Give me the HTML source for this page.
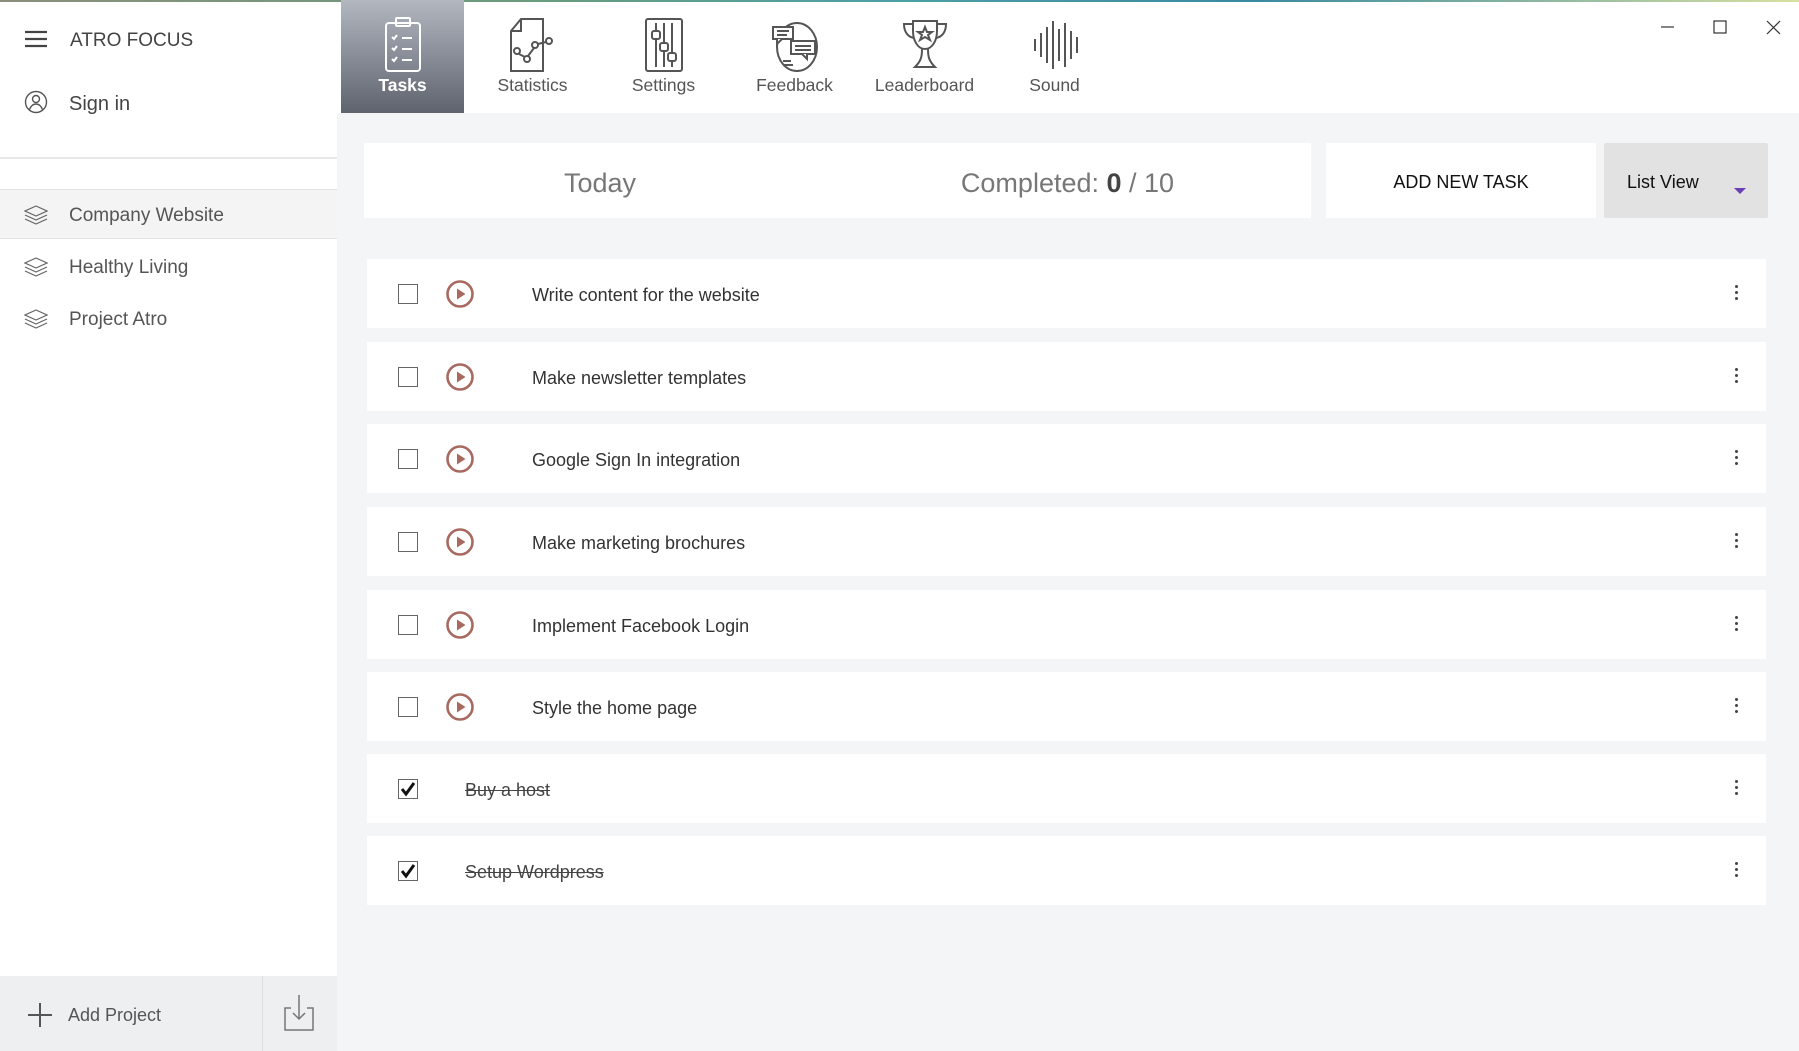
<!DOCTYPE html>
<html><head><meta charset="utf-8"><style>
*{margin:0;padding:0;box-sizing:border-box}
body{width:1799px;height:1051px;overflow:hidden;background:#f4f5f7;font-family:"Liberation Sans",sans-serif;position:relative;color:#333}
.abs{position:absolute}
#side{left:0;top:0;width:337px;height:1051px;background:#fff}
#hdr{left:337px;top:0;width:1462px;height:113px;background:#fff}
#topline{left:0;top:0;width:1799px;height:2px;background:linear-gradient(90deg,#8a8f7a,#6a9c7e 30%,#4aa0a8 50%,#3a8aa0 70%,#d8e0a0)}
.side-t{font-size:19px;color:#444}
.proj{left:0;width:337px;height:50px;font-size:19px;color:#555;display:flex;align-items:center;padding-left:69px;padding-top:4px}
.tab{top:0;width:123px;height:113px;text-align:center;font-size:17.5px;color:#555}
.tab svg{position:absolute;left:50%;top:17px;transform:translateX(-50%)}
.tab span{position:absolute;left:0;right:0;top:75px}
.row{left:367px;width:1399px;height:69px;background:#fff}
.cb{position:absolute;left:31px;top:25px;width:20px;height:20px;border:1.6px solid #666;background:#fff}
.play{position:absolute;left:78px;top:20px}
.tt{position:absolute;left:165px;top:26px;font-size:18px;color:#333}
.done .tt{left:98px;text-decoration:line-through;color:#444}
.kb{position:absolute;right:28px;top:26px;width:3px}
.kb i{display:block;width:3px;height:3px;background:#444;border-radius:50%;margin-bottom:3px}
</style></head><body>
<div id="side" class="abs"></div>
<div id="hdr" class="abs"></div>
<div id="topline" class="abs"></div>

<svg class="abs" style="left:25px;top:30px" width="22" height="18"><g stroke="#444" stroke-width="2.2"><line x1="0" y1="2" x2="22" y2="2"/><line x1="0" y1="9" x2="22" y2="9"/><line x1="0" y1="16" x2="22" y2="16"/></g></svg>
<div class="abs side-t" style="left:70px;top:30px">ATRO FOCUS</div>
<svg class="abs" style="left:24px;top:90px" width="24" height="24" fill="none" stroke="#555" stroke-width="1.4"><circle cx="12" cy="12" r="10.5"/><circle cx="12" cy="9" r="3.5"/><path d="M5.5 19.5c1.5-4 3.5-5.5 6.5-5.5s5 1.5 6.5 5.5"/></svg>
<div class="abs" style="left:69px;top:93px;font-size:20px;color:#444">Sign in</div>
<div class="abs" style="left:0;top:157px;width:337px;height:2px;background:#e8e8e8"></div>
<div class="abs" style="left:0;top:189px;width:337px;height:50px;background:#f4f4f4;border-top:1px solid #e4e4e4;border-bottom:1px solid #e4e4e4"></div>
<div class="abs proj" style="top:189px">Company Website</div>
<div class="abs proj" style="top:241px">Healthy Living</div>
<div class="abs proj" style="top:293px">Project Atro</div>
<svg class="abs" style="left:24px;top:205px" width="24" height="20" fill="none" stroke="#666" stroke-width="1.2"><path d="M12 1L23 6 12 11 1 6z"/><path d="M1 10l11 5 11-5"/><path d="M1 14l11 5 11-5"/></svg>
<svg class="abs" style="left:24px;top:257px" width="24" height="20" fill="none" stroke="#666" stroke-width="1.2"><path d="M12 1L23 6 12 11 1 6z"/><path d="M1 10l11 5 11-5"/><path d="M1 14l11 5 11-5"/></svg>
<svg class="abs" style="left:24px;top:309px" width="24" height="20" fill="none" stroke="#666" stroke-width="1.2"><path d="M12 1L23 6 12 11 1 6z"/><path d="M1 10l11 5 11-5"/><path d="M1 14l11 5 11-5"/></svg>

<div class="abs" style="left:0;top:976px;width:262px;height:75px;background:#eeeff0"></div>
<div class="abs" style="left:262px;top:976px;width:75px;height:75px;background:#eeeff0;border-left:1px solid #ddd"></div>
<svg class="abs" style="left:28px;top:1003px" width="24" height="24" stroke="#555" stroke-width="2"><line x1="12" y1="0" x2="12" y2="24"/><line x1="0" y1="12" x2="24" y2="12"/></svg>
<div class="abs" style="left:68px;top:1005px;font-size:18px;color:#555">Add Project</div>
<svg class="abs" style="left:283px;top:993px" width="32" height="40" fill="none" stroke="#777" stroke-width="1.5"><path d="M8 15H2v22h28V15h-6"/><path d="M16 2v24M10 20l6 6 6-6"/></svg>

<div class="abs tab" style="left:341px;background:linear-gradient(#b2b7c0,#5e636e);color:#fff;font-weight:bold">
<svg width="40" height="56" fill="none" stroke="#fff" stroke-width="2"><rect x="3" y="6" width="34" height="48" rx="3"/><rect x="13" y="1" width="14" height="8" rx="1"/><path d="M9 20l2 2 3-4M9 31l2 2 3-4M9 42l2 2 3-4"/><path d="M19 21h10M19 32h10M19 43h10"/></svg><span>Tasks</span></div>
<div class="abs tab" style="left:471px"><svg width="52" height="56" fill="none" stroke="#555" stroke-width="2"><path d="M14 2h22v52H4V14z"/><path d="M4 14h10V2"/><circle cx="10" cy="34" r="3"/><circle cx="20" cy="42" r="3"/><circle cx="28" cy="28" r="3"/><circle cx="42" cy="24" r="3"/><path d="M12 37l6 3M21 39l6-8M31 27l8-2"/></svg><span>Statistics</span></div>
<div class="abs tab" style="left:602px"><svg width="40" height="56" fill="none" stroke="#555" stroke-width="2"><rect x="2" y="2" width="36" height="52" rx="2"/><path d="M12 6v44M20 6v44M28 6v44"/><rect x="8" y="14" width="8" height="8" rx="2" fill="#fff"/><rect x="16" y="26" width="8" height="8" rx="2" fill="#fff"/><rect x="24" y="36" width="8" height="8" rx="2" fill="#fff"/></svg><span>Settings</span></div>
<div class="abs tab" style="left:733px"><svg width="52" height="56" fill="none" stroke="#555" stroke-width="2"><ellipse cx="28" cy="30" rx="20" ry="24"/><rect x="4" y="10" width="20" height="12" fill="#fff"/><path d="M8 22v5l5-5" fill="#fff"/><path d="M8 14h12M8 18h10"/><rect x="22" y="24" width="24" height="13" fill="#fff"/><path d="M38 37v5l-5-5" fill="#fff"/><path d="M26 29h16M26 33h16"/><path d="M14 44h8M14 48h10"/></svg><span>Feedback</span></div>
<div class="abs tab" style="left:863px"><svg width="50" height="56" fill="none" stroke="#555" stroke-width="2"><path d="M13 4h24v10c0 10-5 18-12 18S13 24 13 14z"/><path d="M13 7H4c0 8 4 13 10 14M37 7h9c0 8-4 13-10 14"/><path d="M22 32c0 8-1 12-7 18h20c-6-6-7-10-7-18"/><path d="M25 10l2 5h5l-4 3 2 5-5-3-5 3 2-5-4-3h5z"/></svg><span>Leaderboard</span></div>
<div class="abs tab" style="left:993px"><svg width="52" height="56" stroke="#555" stroke-width="2"><path d="M6 22v12M12 16v24M18 10v36M24 4v48M30 12v32M36 6v44M42 14v28M48 20v16"/></svg><span>Sound</span></div>

<svg class="abs" style="left:1660px;top:18px" width="130" height="20" stroke="#333" stroke-width="1.2" fill="none"><line x1="1" y1="9" x2="14" y2="9"/><rect x="54" y="3" width="12" height="12"/><path d="M107 3l13 13M120 3l-13 13"/></svg>

<div class="abs" style="left:364px;top:143px;width:947px;height:75px;background:#fff"></div>
<div class="abs" style="left:364px;top:168px;width:472px;text-align:center;font-size:27px;color:#777">Today</div>
<div class="abs" style="left:860px;top:168px;width:415px;text-align:center;font-size:27px;color:#777">Completed: <b style="color:#444">0</b> / 10</div>
<div class="abs" style="left:1326px;top:145px;width:270px;height:75px;text-align:center;line-height:75px;font-size:18px;color:#111"></div>
<div class="abs" style="left:1326px;top:143px;width:270px;height:75px;background:#fff;text-align:center;line-height:78px;font-size:18px;color:#111">ADD NEW TASK</div>
<div class="abs" style="left:1604px;top:143px;width:164px;height:75px;background:#e2e2e2;border-radius:2px"></div>
<div class="abs" style="left:1627px;top:172px;font-size:18px;color:#111">List View</div>
<svg class="abs" style="left:1734px;top:188px" width="14" height="8"><path d="M0 0h12L6 6z" fill="#6a3fb5"/></svg>

<div class="abs row" style="top:259px"><div class="cb"></div><svg class="play" width="30" height="30"><circle cx="15" cy="15" r="12.5" fill="none" stroke="#a86a60" stroke-width="2.6"/><path d="M12 9.5v11l8.5-5.5z" fill="#a86a60"/></svg><div class="tt">Write content for the website</div><div class="kb"><i></i><i></i><i></i></div></div>
<div class="abs row" style="top:342px"><div class="cb"></div><svg class="play" width="30" height="30"><circle cx="15" cy="15" r="12.5" fill="none" stroke="#a86a60" stroke-width="2.6"/><path d="M12 9.5v11l8.5-5.5z" fill="#a86a60"/></svg><div class="tt">Make newsletter templates</div><div class="kb"><i></i><i></i><i></i></div></div>
<div class="abs row" style="top:424px"><div class="cb"></div><svg class="play" width="30" height="30"><circle cx="15" cy="15" r="12.5" fill="none" stroke="#a86a60" stroke-width="2.6"/><path d="M12 9.5v11l8.5-5.5z" fill="#a86a60"/></svg><div class="tt">Google Sign In integration</div><div class="kb"><i></i><i></i><i></i></div></div>
<div class="abs row" style="top:507px"><div class="cb"></div><svg class="play" width="30" height="30"><circle cx="15" cy="15" r="12.5" fill="none" stroke="#a86a60" stroke-width="2.6"/><path d="M12 9.5v11l8.5-5.5z" fill="#a86a60"/></svg><div class="tt">Make marketing brochures</div><div class="kb"><i></i><i></i><i></i></div></div>
<div class="abs row" style="top:590px"><div class="cb"></div><svg class="play" width="30" height="30"><circle cx="15" cy="15" r="12.5" fill="none" stroke="#a86a60" stroke-width="2.6"/><path d="M12 9.5v11l8.5-5.5z" fill="#a86a60"/></svg><div class="tt">Implement Facebook Login</div><div class="kb"><i></i><i></i><i></i></div></div>
<div class="abs row" style="top:672px"><div class="cb"></div><svg class="play" width="30" height="30"><circle cx="15" cy="15" r="12.5" fill="none" stroke="#a86a60" stroke-width="2.6"/><path d="M12 9.5v11l8.5-5.5z" fill="#a86a60"/></svg><div class="tt">Style the home page</div><div class="kb"><i></i><i></i><i></i></div></div>
<div class="abs row done" style="top:754px"><div class="cb"><svg width="18" height="18" style="position:absolute;left:0;top:0"><path d="M3 9l4 5 8-11" fill="none" stroke="#111" stroke-width="3"/></svg></div><div class="tt">Buy a host</div><div class="kb"><i></i><i></i><i></i></div></div>
<div class="abs row done" style="top:836px"><div class="cb"><svg width="18" height="18" style="position:absolute;left:0;top:0"><path d="M3 9l4 5 8-11" fill="none" stroke="#111" stroke-width="3"/></svg></div><div class="tt">Setup Wordpress</div><div class="kb"><i></i><i></i><i></i></div></div>
</body></html>
